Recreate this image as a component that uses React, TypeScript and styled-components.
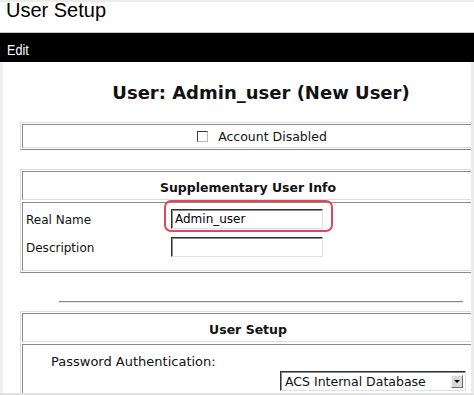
import React from "react"
import styled, { createGlobalStyle } from "styled-components"

const GlobalStyle = createGlobalStyle`
  html, body {
    margin: 0;
    padding: 0;
    background: #ffffff;
    overflow: hidden;
  }
`

const Frame = styled.div`
  width: 474px;
  height: 395px;
  box-sizing: border-box;
  border-bottom: 2px solid #e2e2e2;
  display: flex;
  flex-direction: column;
  overflow: hidden;
  background: #fff;
`

const TitleBar = styled.div`
  height: 30px;
  border-top: 2px solid #ececec;
  padding-left: 6px;
  display: flex;
  align-items: flex-start;
`

const Title = styled.h1`
  margin: 0;
  font-family: "Liberation Sans", Arial, sans-serif;
  font-weight: normal;
  font-size: 20px;
  line-height: 16px;
  color: #000;
`

const Rule = styled.div`
  height: 1px;
  background: #c9c9c9;
`

const EditBar = styled.div`
  height: 29px;
  background: #000;
  display: flex;
  align-items: center;
  padding: 4px 0 0 7px;
  box-sizing: border-box;
`

// the bar label is set in a condensed face; squeeze the regular one to match
const EditLabel = styled.span`
  display: inline-block;
  font-family: "Liberation Sans", Arial, sans-serif;
  font-size: 15px;
  line-height: 15px;
  color: #fff;
  transform: scaleX(0.84);
  transform-origin: left center;
`

const Content = styled.div`
  flex: 1;
  overflow: hidden;
  border-left: 3px solid #f0f0f0;
  border-right: 3px solid #ececec;
`

const Sheet = styled.div`
  width: 516px;
  display: flex;
  flex-direction: column;
  font-family: "DejaVu Sans", Verdana, sans-serif;
  color: #000;
`

const Heading = styled.h2`
  margin: 20px 0 0;
  text-align: center;
  font-size: 18px;
  line-height: 22px;
  font-weight: bold;
  color: #111;
`

const Panel = styled.div<{ $width: number; $top: number }>`
  width: ${p => p.$width}px;
  margin: ${p => p.$top}px 0 0 17px;
  box-sizing: border-box;
  border: 1px solid;
  border-color: #dcdcdc #8a8a8a #8a8a8a #dcdcdc;
  padding: 1px;
  display: flex;
  flex-direction: column;
  gap: 2px;
`

const Cell = styled.div`
  border: 1px solid;
  border-color: #8a8a8a #dcdcdc #dcdcdc #8a8a8a;
`

const AccountCell = styled(Cell)`
  height: 22px;
  display: flex;
  align-items: center;
  justify-content: center;
  gap: 10px;
  font-size: 12.5px;
  color: #111;
`

const Checkbox = styled.span`
  width: 11px;
  height: 11px;
  box-sizing: border-box;
  border: 1px solid;
  border-color: #3a3a3a #b8b8b8 #b8b8b8 #3a3a3a;
  background: #fff;
  margin-top: 1px;
`

const HeaderCell = styled(Cell)`
  padding-top: 4px;
  height: 23px;
  line-height: 23px;
  text-align: center;
  font-weight: bold;
  font-size: 12.5px;
  color: #111;
`

const FormGrid = styled(Cell)`
  display: grid;
  grid-template-columns: 145px 152px;
  row-gap: 8px;
  padding: 5px 0 14px 3px;
`

const FieldLabel = styled.label`
  font-size: 12px;
  line-height: 16px;
  padding-top: 4px;
  color: #111;
`

const FieldBox = styled.div`
  position: relative;
  width: 152px;
  height: 20px;
`

const TextInput = styled.input`
  width: 100%;
  height: 100%;
  box-sizing: border-box;
  margin: 0;
  padding: 0 0 0 3px;
  border: 1px solid;
  border-color: #333 #e0e0e0 #e0e0e0 #333;
  box-shadow: inset 1px 1px 0 #8a8a8a;
  background: #fff;
  font-family: "DejaVu Sans", Verdana, sans-serif;
  font-size: 12px;
  color: #000;
  outline: none;
`

const Highlight = styled.span`
  position: absolute;
  top: -8px;
  left: -7px;
  right: -10px;
  bottom: -4px;
  border: 2px solid #e0475c;
  border-radius: 7px;
  pointer-events: none;
`

const Divider = styled.div`
  width: 404px;
  margin: 28px auto 8px;
  border-top: 1px solid #8c8c8c;
  border-bottom: 1px solid #e4e4e4;
`

const SetupCell = styled(Cell)`
  display: flex;
  flex-direction: column;
  padding: 9px 7px 20px 28px;
`

const SetupLabel = styled.div`
  font-size: 13px;
  line-height: 16px;
  color: #111;
`

const SelectRow = styled.div`
  display: flex;
  justify-content: flex-end;
  margin-top: 1px;
`

const SelectBox = styled.div`
  width: 186px;
  height: 20px;
  box-sizing: border-box;
  border: 1px solid;
  border-color: #333 #e0e0e0 #e0e0e0 #333;
  box-shadow: inset 1px 1px 0 #8a8a8a;
  display: flex;
  align-items: center;
  justify-content: space-between;
  padding: 0 2px 0 4px;
  font-size: 12.5px;
  color: #111;
`

const DropButton = styled.span`
  width: 12px;
  height: 13px;
  box-sizing: border-box;
  border: 1px solid;
  border-color: #f4f4f4 #6e6e6e #6e6e6e #f4f4f4;
  background: #d8d8d8;
  display: flex;
  align-items: center;
  justify-content: center;
`

const Arrow = styled.span`
  width: 0;
  height: 0;
  border-left: 3px solid transparent;
  border-right: 3px solid transparent;
  border-top: 3px solid #000;
`

export default function App() {
  return (
    <>
      <GlobalStyle />
      <Frame>
        <TitleBar>
          <Title>User Setup</Title>
        </TitleBar>
        <Rule />
        <EditBar>
          <EditLabel>Edit</EditLabel>
        </EditBar>
        <Content>
          <Sheet>
            <Heading>User: Admin_user (New User)</Heading>

            <Panel $width={484} $top={18}>
              <AccountCell>
                <Checkbox />
                <span>Account Disabled</span>
              </AccountCell>
            </Panel>

            <Panel $width={456} $top={19}>
              <HeaderCell>Supplementary User Info</HeaderCell>
              <FormGrid>
                <FieldLabel>Real Name</FieldLabel>
                <FieldBox>
                  <TextInput defaultValue="Admin_user" />
                  <Highlight />
                </FieldBox>
                <FieldLabel>Description</FieldLabel>
                <FieldBox>
                  <TextInput defaultValue="" />
                </FieldBox>
              </FormGrid>
            </Panel>

            <Divider />

            <Panel $width={456} $top={0}>
              <HeaderCell>User Setup</HeaderCell>
              <SetupCell>
                <SetupLabel>Password Authentication:</SetupLabel>
                <SelectRow>
                  <SelectBox>
                    <span>ACS Internal Database</span>
                    <DropButton>
                      <Arrow />
                    </DropButton>
                  </SelectBox>
                </SelectRow>
              </SetupCell>
            </Panel>
          </Sheet>
        </Content>
      </Frame>
    </>
  )
}
